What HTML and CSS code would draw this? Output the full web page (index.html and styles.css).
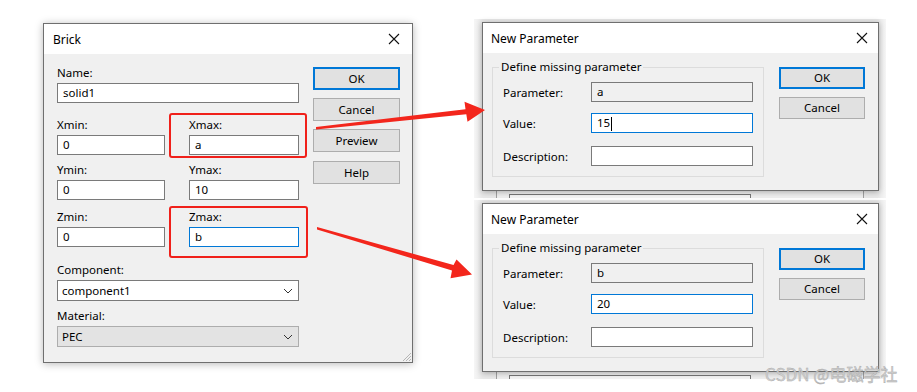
FILE: index.html
```html
<!DOCTYPE html>
<html lang="en">
<head>
  <meta charset="UTF-8">
  <title>Brick / New Parameter</title>
  <link rel="stylesheet" href="styles.css">
</head>
<body>
  <div class="canvas">

    <!-- Brick dialog -->
    <div class="win brick">
      <div class="titlebar">
        <span class="title">Brick</span>
        <svg class="close" width="12" height="12" viewBox="0 0 12 12"><path d="M1 1L11 11M11 1L1 11" stroke="#111" stroke-width="1.1" fill="none"/></svg>
      </div>
      <div class="body">
        <div class="form">
          <div class="field wide">
            <div class="label">Name:</div>
            <div class="box">solid1</div>
          </div>
          <div class="row row-x">
            <div class="field">
              <div class="label">Xmin:</div>
              <div class="box">0</div>
            </div>
            <div class="field marked">
              <div class="label">Xmax:</div>
              <div class="box">a</div>
              <div class="mark mark-x"></div>
            </div>
          </div>
          <div class="row row-y">
            <div class="field">
              <div class="label">Ymin:</div>
              <div class="box">0</div>
            </div>
            <div class="field">
              <div class="label">Ymax:</div>
              <div class="box">10</div>
            </div>
          </div>
          <div class="row row-z">
            <div class="field">
              <div class="label">Zmin:</div>
              <div class="box">0</div>
            </div>
            <div class="field marked">
              <div class="label">Zmax:</div>
              <div class="box focus">b</div>
              <div class="mark mark-z"></div>
            </div>
          </div>
          <div class="field wide row-comp">
            <div class="label">Component:</div>
            <div class="box combo">component1
              <svg class="chev" width="10" height="6" viewBox="0 0 10 6"><path d="M1 1L5 5L9 1" stroke="#333" stroke-width="1" fill="none"/></svg>
            </div>
          </div>
          <div class="field wide row-mat">
            <div class="label">Material:</div>
            <div class="box combo disabled">PEC
              <svg class="chev" width="10" height="6" viewBox="0 0 10 6"><path d="M1 1L5 5L9 1" stroke="#333" stroke-width="1" fill="none"/></svg>
            </div>
          </div>
        </div>
        <div class="buttons">
          <div class="btn default">OK</div>
          <div class="btn">Cancel</div>
          <div class="btn">Preview</div>
          <div class="btn gap">Help</div>
        </div>
        <svg class="grip" width="12" height="12" viewBox="0 0 12 12"><path d="M11 3L3 11M11 6L6 11M11 9L9 11" stroke="#b5b5b5" stroke-width="1" fill="none"/></svg>
      </div>
    </div>

    <!-- New Parameter dialogs -->
    <div class="col">
      <div class="shot">
        <div class="win param">
          <div class="titlebar">
            <span class="title">New Parameter</span>
            <svg class="close" width="12" height="12" viewBox="0 0 12 12"><path d="M1 1L11 11M11 1L1 11" stroke="#111" stroke-width="1.1" fill="none"/></svg>
          </div>
          <div class="body">
            <div class="group">
              <span class="legend">Define missing parameter</span>
              <div class="prow"><span class="plabel">Parameter:</span><div class="box readonly">a</div></div>
              <div class="prow"><span class="plabel">Value:</span><div class="box focus">15<span class="caret"></span></div></div>
              <div class="prow"><span class="plabel">Description:</span><div class="box"></div></div>
            </div>
            <div class="buttons">
              <div class="btn default">OK</div>
              <div class="btn">Cancel</div>
            </div>
          </div>
        </div>
        <div class="ghost"><div class="ghost-box"></div></div>
      </div>

      <div class="shot">
        <div class="win param">
          <div class="titlebar">
            <span class="title">New Parameter</span>
            <svg class="close" width="12" height="12" viewBox="0 0 12 12"><path d="M1 1L11 11M11 1L1 11" stroke="#111" stroke-width="1.1" fill="none"/></svg>
          </div>
          <div class="body">
            <div class="group">
              <span class="legend">Define missing parameter</span>
              <div class="prow"><span class="plabel">Parameter:</span><div class="box readonly">b</div></div>
              <div class="prow"><span class="plabel">Value:</span><div class="box focus">20</div></div>
              <div class="prow"><span class="plabel">Description:</span><div class="box"></div></div>
            </div>
            <div class="buttons">
              <div class="btn default">OK</div>
              <div class="btn">Cancel</div>
            </div>
          </div>
        </div>
        <div class="ghost"><div class="ghost-box"></div></div>
      </div>
    </div>

    <!-- red annotation arrows -->
    <svg class="arrows" width="917" height="392" viewBox="0 0 917 392">
      <polygon fill="#f3261c" points="316,127 465.5,109.3 464.5,101.8 485,110 467.5,121.8 466.3,114.3 316,129.5"/>
      <polygon fill="#f3261c" points="317,227 453.5,265 456.5,259.5 472,274.5 450.5,278.3 452,270.5 317,229.5"/>
    </svg>

    <div class="watermark">CSDN @电磁学社</div>
  </div>
</body>
</html>
```

FILE: styles.css
```css
* {
  box-sizing: border-box;
}

body {
  margin: 0;
  background: #fff;
  font-family: "Noto Sans", "Liberation Sans", sans-serif;
  font-size: 11.5px;
  color: #000;
}

.canvas {
  position: relative;
  width: 917px;
  height: 392px;
  display: flex;
  align-items: flex-start;
  overflow: hidden;
}

/* generic window */
.win {
  background: #f0f0f0;
  border: 1px solid #6f6f6f;
  display: flex;
  flex-direction: column;
}

.titlebar {
  height: 30px;
  background: #fff;
  display: flex;
  align-items: center;
  justify-content: space-between;
  padding: 0 10px 0 8px;
  font-size: 12px;
}

.box {
  height: 20px;
  background: #fff;
  border: 1px solid #7a7a7a;
  padding: 0 5px;
  line-height: 18px;
  position: relative;
}

.box.focus {
  border-color: #0078d7;
}

.box.readonly {
  background: #f0f0f0;
}

.btn {
  height: 23px;
  background: #e1e1e1;
  border: 1px solid #adadad;
  text-align: center;
  line-height: 21px;
}

.btn.default {
  border: 2px solid #0078d7;
  line-height: 19px;
}

/* Brick */
.brick {
  width: 370px;
  height: 340px;
  margin: 23px 0 0 43px;
  box-shadow: 0 1px 8px rgba(0, 0, 0, 0.28);
}

.brick .titlebar {
  padding-left: 9px;
  padding-right: 12px;
}

.brick .body {
  flex: 1;
  display: flex;
  padding: 11px 0 0 13px;
  position: relative;
}

.form {
  width: 242px;
}

.label {
  height: 16px;
  line-height: 16px;
  margin-bottom: 2px;
}

.row {
  display: grid;
  grid-template-columns: 108px 110px;
  column-gap: 24px;
}

.row-x { margin-top: 14px; }
.row-y { margin-top: 7px; }
.row-z { margin-top: 9px; }
.row-comp { margin-top: 15px; }
.row-mat { margin-top: 7px; }

.field {
  position: relative;
}

.combo {
  height: 21px;
  line-height: 19px;
  padding-left: 4px;
  border-color: #7a7a7a;
}

.combo.disabled {
  background: #e3e3e3;
  border-color: #adadad;
}

.chev {
  position: absolute;
  right: 5px;
  top: 7px;
}

/* red annotation frames */
.mark {
  position: absolute;
  border: 2.5px solid #f0201a;
  border-radius: 3px;
}

.mark-x {
  left: -20px;
  right: -8px;
  top: -4px;
  bottom: -3px;
}

.mark-z {
  left: -20px;
  right: -9px;
  top: -3px;
  bottom: -11px;
}

.brick .buttons {
  width: 87px;
  margin-left: 14px;
  padding-top: 2px;
  display: flex;
  flex-direction: column;
  gap: 8px;
}

.brick .btn.gap {
  margin-top: 1px;
}

.grip {
  position: absolute;
  right: 0;
  bottom: 0;
}

/* New Parameter */
.col {
  margin-left: 61px;
  margin-top: 19px;
  display: flex;
  flex-direction: column;
  gap: 2px;
}

.shot {
  width: 412px;
  padding: 3px 8px 0 8px;
  background: linear-gradient(to right, #f6f6f6, #e9e9e9 8px, #e9e9e9 404px, #f6f6f6);
}

.param {
  width: 397px;
  height: 169px;
  box-shadow: 0 1px 6px rgba(0, 0, 0, 0.3);
  position: relative;
}

.param .body {
  flex: 1;
  display: flex;
  padding: 14px 0 0 9px;
}

.group {
  position: relative;
  width: 272px;
  height: 110px;
  border: 1px solid #dcdcdc;
  padding: 14px 10px 0 10px;
}

.legend {
  position: absolute;
  top: -9px;
  left: 6px;
  padding: 0 2px;
  background: #f0f0f0;
  line-height: 16px;
}

.prow {
  display: flex;
  align-items: center;
  margin-bottom: 11px;
}

.prow:nth-child(3) {
  margin-bottom: 13px;
}

.plabel {
  width: 88px;
}

.prow .box {
  width: 162px;
}

.caret {
  display: inline-block;
  width: 1px;
  height: 14px;
  background: #000;
  vertical-align: middle;
  margin-left: 1px;
}

.param .buttons {
  width: 86px;
  margin-left: 15px;
  display: flex;
  flex-direction: column;
  gap: 8px;
}

.param .btn {
  height: 22px;
  line-height: 20px;
}

.param .btn.default {
  line-height: 18px;
}

/* the window under the dialog */
.ghost {
  height: 7px;
  margin: 0 14px 0 14px;
  border-left: 1px solid #a0a0a0;
  border-right: 1px solid #a0a0a0;
  background: #efefef;
  padding: 3px 0 0 12px;
}

.ghost-box {
  width: 242px;
  height: 4px;
  border: 1px solid #777;
  border-bottom: 0;
  background: #f4f4f4;
}

.arrows {
  position: absolute;
  left: 0;
  top: 0;
  pointer-events: none;
}

.watermark {
  position: absolute;
  left: 765px;
  top: 361px;
  font-family: "Noto Sans CJK SC", "Noto Sans", sans-serif;
  font-size: 17px;
  color: #d0d0d0;
  -webkit-text-stroke: 0.4px #a8a8a8;
}
```
